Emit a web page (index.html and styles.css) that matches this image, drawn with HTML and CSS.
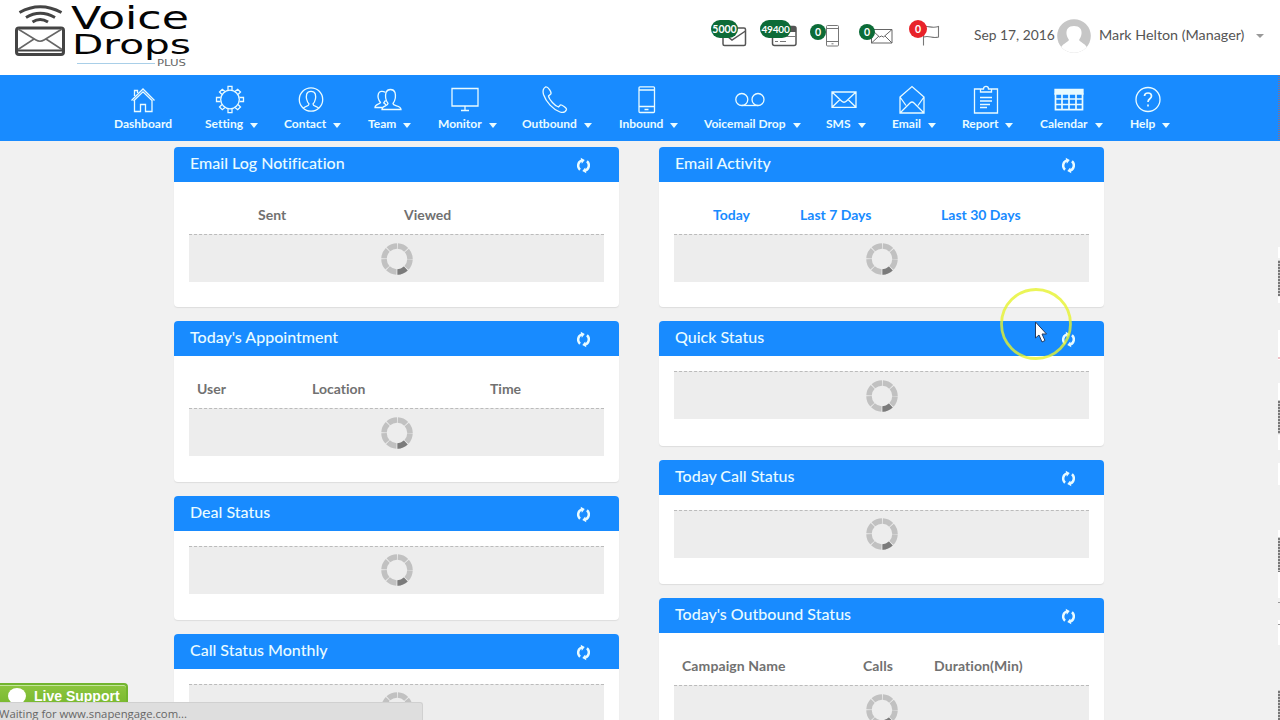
FILE: index.html
```html
<!DOCTYPE html>
<html lang="en">
<head>
<meta charset="utf-8">
<title>Voice Drops Plus</title>
<link rel="stylesheet" href="styles.css">
</head>
<body>
<svg class="defs" aria-hidden="true">
  <symbol id="refresh" viewBox="0 0 16 18">
    <path d="M6.2 3.6C1.6 5.4 1.2 10.800 4.300 13.500M9.800 14.400C14.400 12.600 14.800 7.200 11.700 4.500" fill="none" stroke="currentColor" stroke-width="2.600"/>
    <path d="M5 .8 9.300 3.200 6.200 7zM11 17.200 6.700 14.800 9.800 11z" fill="currentColor"/>
  </symbol>
  <symbol id="loader" viewBox="0 0 32 32">
    <circle cx="16" cy="16" r="13" fill="none" stroke="#c1c1c1" stroke-width="5.500" stroke-dasharray="9.400 .81" stroke-dashoffset="-.4"/>
    <path d="M16.500 26.200V31.700A15.700 15.700 0 0 0 26.700 27.400L22.900 23.500A10.300 10.300 0 0 1 16.500 26.200z" fill="#7b7b7b"/>
  </symbol>
</svg>

<header class="top">
  <svg class="logo" viewBox="0 0 200 75" width="200" height="75">
    <g fill="none" stroke="#444" stroke-width="3">
      <path d="M19.500 12.500Q40 1 61.500 12.500M26 17.500Q40 9 55 17.500M32.500 22Q40 17 48 22"/>
      <rect x="16.500" y="28" width="47" height="26.500" rx="2.500"/>
      <path d="M17 50.500H63" stroke-width="2"/>
      <path d="M18 29 36 40Q40 42.500 44 40L62 29M18 49.500 34 39M62 49.500 46 39" stroke="#666" stroke-width="1.500"/>
    </g>
    <text class="logo-text" x="71" y="28.500" font-size="32" textLength="118" lengthAdjust="spacingAndGlyphs">Voice</text>
    <text class="logo-text" x="72" y="53.500" font-size="27" textLength="119" lengthAdjust="spacingAndGlyphs">Drops</text>
    <path d="M77 63.500H155" stroke="#a9cfe8"/>
    <text class="logo-plus" x="157" y="66" textLength="29" lengthAdjust="spacingAndGlyphs">PLUS</text>
  </svg>
  <div class="statuses">
    <div class="status"><svg width="40" height="34" viewBox="0 0 40 34"><g fill="none" stroke="#555" stroke-width="1.500"><rect x="13" y="10" width="22.500" height="17.500" rx="1.500"/><path d="M13 15 22 22 35.500 13"/></g></svg><b class="badge wide">5000</b></div>
    <div class="status"><svg width="40" height="34" viewBox="0 0 40 34"><rect x="13.500" y="8.500" width="23.500" height="19" rx="2" fill="none" stroke="#555" stroke-width="1.500"/><path d="M28 9h9v5h-9z" fill="#555"/><path d="M13 18.500H37M16 23.500h3m2 0h6" stroke="#777"/></svg><b class="badge wider">49400</b></div>
    <div class="status"><svg width="40" height="34" viewBox="0 0 40 34"><g fill="none" stroke="#777"><rect x="16.500" y="7.500" width="12" height="20.500" rx="1"/><path d="M16.500 10.500h12M16.500 23.500h12M21.500 25.800h2"/></g></svg><b class="badge">0</b></div>
    <div class="status"><svg width="40" height="34" viewBox="0 0 40 34"><path d="M12.500 11.500h20.500v13.500H12.500zL20.500 19Q22.500 17 24.500 19L33 11.500M12.500 25 20 18M33 25 26 18" fill="none" stroke="#666"/></svg><b class="badge">0</b></div>
    <div class="status"><svg width="40" height="34" viewBox="0 0 40 34"><path d="M16.500 8V27.500M16.500 9C22 7 24 11 31.500 8.500V19C25 21 23 17 16.500 19" fill="none" stroke="#777" stroke-width="1.100"/></svg><b class="badge alert">0</b></div>
  </div>
  <div class="account">
    <span class="date">Sep 17, 2016</span>
    <svg class="avatar" viewBox="0 0 34 34" width="34" height="34"><defs><clipPath id="round"><circle cx="17" cy="17" r="16.800"/></clipPath></defs><g clip-path="url(#round)"><path d="M0 0H34V34H0z" fill="#c6c6c6"/><path d="M17 7C11.500 7 9 10 9.500 15 10 18 11 19 12 21 10 24 6 24 3 30V34H31V30C28 24 24 24 22 21 23 19 24 18 24.500 15 25 10 22.500 7 17 7z" fill="#fff"/></g></svg>
    <span class="name">Mark Helton (Manager)</span>
    <i class="caret gray"></i>
  </div>
</header>

<nav class="nav">
  <a class="item plain"><svg viewBox="0 0 30 30"><path d="M3.500 15.500 15 4 26.500 15.500M5.500 16 15 6.800 24.500 16M6.500 11V5.500h3V8M6.500 15.500V26.500H12.500V19.500h5V26.500H24V15.500"/></svg><span>Dashboard</span></a>
  <a class="item"><svg viewBox="0 0 30 30"><circle cx="15" cy="14.500" r="9.300"/><path d="M13 5V1.300h4V5M13 24v3.700h4V24M5.500 12.500H1.500v4H5.500M24.500 12.500h4v4H24.500M7 9.500 4.500 7 7.300 4.300 10 6.500M20 6.500 22.700 4.300 25.500 7 23 9.500M7 19.500 4.500 22 7.300 24.700 10 22.500M20 22.500 22.700 24.700 25.500 22 23 19.500"/></svg><span>Setting<i class="caret"></i></span></a>
  <a class="item"><svg viewBox="0 0 30 30"><circle cx="15" cy="14.500" r="11.700"/><path d="M7.500 23C9 21 13 21.500 13 19 10.500 16 10 12 10.700 9 12 5.500 18 5.500 19.300 9 20 12 19.500 16 17 19 17 21.500 21 21 22.500 23"/></svg><span>Contact<i class="caret"></i></span></a>
  <a class="item"><svg viewBox="0 0 30 30"><path d="M9 24.500C9 20 15 21.500 15 18.500 12.500 15 12 11 13 7.500 14.500 3.500 20.500 3.500 22 7.500 23 11 22.500 15 20 18.500 20 21.500 28 20 28 24.500zM9.500 22.500H2C2 19 7 19.500 7.500 17.500 5 14.500 4.500 11.500 5.500 8.500 6.500 6.500 9.500 5.500 12.200 7.300M12.500 15.500 10.700 17.800 13 19.700"/></svg><span>Team<i class="caret"></i></span></a>
  <a class="item"><svg viewBox="0 0 30 30"><path d="M2 3.500H28V21H2zM15 21v4M11 25.500h8"/></svg><span>Monitor<i class="caret"></i></span></a>
  <a class="item"><svg viewBox="0 0 30 30"><path d="M5.500 2C3 3.500 2.500 6 3.500 9.500 6 17 13 24.500 20 27 23 28 25.500 27 26.500 24.500 27 23 21.500 19.300 20.300 20L18.500 22C15 21 9 14.500 8.500 11L10.800 9C12 7.500 8 1.300 5.500 2z"/></svg><span>Outbound<i class="caret"></i></span></a>
  <a class="item"><svg viewBox="0 0 30 30"><rect x="7" y="1.800" width="15.500" height="25.700" rx="1"/><path d="M7 5h15.500M7 21.500h15.500M12.500 24.500h4"/></svg><span>Inbound<i class="caret"></i></span></a>
  <a class="item"><svg viewBox="0 0 30 30"><circle cx="6.800" cy="14.500" r="6"/><circle cx="23" cy="14.500" r="6"/><path d="M6.800 20.500H23"/></svg><span>Voicemail Drop<i class="caret"></i></span></a>
  <a class="item"><svg viewBox="0 0 30 30"><path d="M3 7H27V22.300H3zL12.500 16Q15 18.500 17.500 16L27 7M3 22.300 11 14.500M27 22.300 19 14.500"/></svg><span>SMS<i class="caret"></i></span></a>
  <a class="item"><svg viewBox="0 0 30 30"><path d="M3 12 15 1.500 27 12V28H3zM3 12 9 20.500M27 12 21 20.500M3 28 13 18Q15 16 17 18L27 28"/></svg><span>Email<i class="caret"></i></span></a>
  <a class="item"><svg viewBox="0 0 30 30"><path d="M9.500 4H3.500V28H26.500V4H20.500M9.500 7V4H12.500C12.500 .5 17.500 .5 17.500 4H20.500V7zM9 12.500H21M9 16H21M9 19.500H19M9 22.500H16"/></svg><span>Report<i class="caret"></i></span></a>
  <a class="item"><svg viewBox="0 0 30 30"><path d="M1 4.500H29V9H1z" fill="currentColor"/><path d="M1.500 8V24.700H28.500V8M1.500 14H28.500M1.500 19.500H28.500M8 9V24.500M15 9V24.500M22 9V24.500" stroke-width="1.700"/></svg><span>Calendar<i class="caret"></i></span></a>
  <a class="item"><svg viewBox="0 0 30 30"><circle cx="15" cy="14.500" r="12"/><path d="M11.500 11C11.500 7 18.500 7 18.500 11 18.500 14 15 13.500 15 17M15 19.500V21.500" stroke-width="1.700"/></svg><span>Help<i class="caret"></i></span></a>
</nav>

<main class="board">
  <div class="column">
    <section class="card tall">
      <h2>Email Log Notification<svg class="refresh"><use href="#refresh"/></svg></h2>
      <div class="heads sent"><span>Sent</span><span>Viewed</span></div>
      <div class="loading"><svg><use href="#loader"/></svg></div>
    </section>
    <section class="card tall">
      <h2>Today's Appointment<svg class="refresh"><use href="#refresh"/></svg></h2>
      <div class="heads appointment"><span>User</span><span>Location</span><span>Time</span></div>
      <div class="loading"><svg><use href="#loader"/></svg></div>
    </section>
    <section class="card">
      <h2>Deal Status<svg class="refresh"><use href="#refresh"/></svg></h2>
      <div class="loading"><svg><use href="#loader"/></svg></div>
    </section>
    <section class="card">
      <h2>Call Status Monthly<svg class="refresh"><use href="#refresh"/></svg></h2>
      <div class="loading"><svg><use href="#loader"/></svg></div>
    </section>
  </div>
  <div class="column">
    <section class="card tall">
      <h2>Email Activity<svg class="refresh"><use href="#refresh"/></svg></h2>
      <div class="heads activity"><span>Today</span><span>Last 7 Days</span><span>Last 30 Days</span></div>
      <div class="loading"><svg><use href="#loader"/></svg></div>
    </section>
    <section class="card">
      <h2>Quick Status<svg class="refresh"><use href="#refresh"/></svg></h2>
      <div class="loading"><svg><use href="#loader"/></svg></div>
    </section>
    <section class="card">
      <h2>Today Call Status<svg class="refresh"><use href="#refresh"/></svg></h2>
      <div class="loading"><svg><use href="#loader"/></svg></div>
    </section>
    <section class="card tall">
      <h2>Today's Outbound Status<svg class="refresh"><use href="#refresh"/></svg></h2>
      <div class="heads outbound"><span>Campaign Name</span><span>Calls</span><span>Duration(Min)</span></div>
      <div class="loading"><svg><use href="#loader"/></svg></div>
    </section>
  </div>
</main>

<svg class="edge" width="2" height="645" viewBox="0 75 2 645">
  <path d="M1 75V141" stroke="#77749c" stroke-width="2" stroke-dasharray="1 1"/>
  <path d="M1 247V258M1 280V290M1 297V303M1 330V360M1 383V400M1 435V450M1 463V485M1 530V545M1 572V598M1 620V645" stroke="#fff" stroke-width="2"/>
  <path d="M1 260V296M1 400V434M1 537V572M1 690V720" stroke="#777" stroke-width="2"/>
  <path d="M1 260V296M1 400V434M1 537V572M1 690V720" stroke="#ccc" stroke-width="2" stroke-dasharray="1 2"/>
  <path d="M0 358H2" stroke="#e0808d"/><path d="M0 602.500H2M0 624.500H2" stroke="#999"/>
</svg>
<div class="support"><i></i>Live Support</div>
<div class="statusbar">Waiting for www.snapengage.com...</div>
<svg class="pointer" width="76" height="76" viewBox="0 0 76 76">
  <circle cx="38" cy="38" r="34.500" fill="none" stroke="#e6f32e" stroke-opacity=".8" stroke-width="2.800"/>
  <path d="M37.500 36V52L41 49 44 56 47 54.500 44 48H48.500z" fill="#fff" stroke="#223b60"/>
</svg>
</body>
</html>
```
FILE: styles.css
```css
* { box-sizing: border-box; }
body {
  margin: 0;
  width: 1280px;
  height: 720px;
  overflow: hidden;
  position: relative;
  background: #f1f1f1;
  font-family: Lato, "Liberation Sans", sans-serif;
  font-variant-ligatures: none;
}
.defs { position: absolute; width: 0; height: 0; }

.top { height: 75px; background: #fff; display: flex; }
.logo { display: block; }
.logo-text { font-family: "DejaVu Sans", sans-serif; fill: #050505; }
.logo-plus { font-family: "DejaVu Sans", sans-serif; font-size: 9px; fill: #666; }
.statuses { display: grid; grid-template-columns: 49px 51px 49px 48px 49px; margin-left: 510px; padding-top: 18px; }
.status { position: relative; height: 34px; }
.badge {
  position: absolute; left: 0; top: 6px;
  width: 16px; height: 16px; border-radius: 10px;
  background: #0c6b37; color: #fff;
  font-size: 10.5px; line-height: 16px; text-align: center;
}
.wide { top: 2px; left: 1px; width: 27px; height: 18px; line-height: 18px; }
.wider { top: 2px; left: 1px; width: 31px; height: 18px; line-height: 18px; font-size: 10px; letter-spacing: -.2px; }
.alert { top: 2px; left: 2px; width: 18px; height: 18px; line-height: 18px; background: #e8232a; }
.account { display: flex; align-items: center; height: 71px; margin-left: 18px; font-size: 14.3px; color: #555; }
.date { width: 83px; padding-bottom: 2px; white-space: nowrap; font-size: 13.8px; }
.name { width: 157px; margin-left: 8px; padding-bottom: 2px; white-space: nowrap; }
.caret { display: inline-block; border: 4px solid transparent; border-top-color: currentColor; border-bottom: 0; }
.caret.gray { color: #999; }

.nav {
  height: 66px; padding: 10px 0 0 114px; background: #188bff; color: #e9fbff;
  display: grid;
  grid-template-columns: 91px 79px 84px 70px 84px 97px 85px 122px 66px 70px 78px 90px 60px;
}
.item { display: flex; flex-direction: column; align-items: center; justify-self: start; font-weight: 700; font-size: 12px; }
.item svg { width: 30px; height: 30px; margin: 0 4px 0 0; fill: none; stroke: currentColor; stroke-width: 1.3; }
.plain svg { margin-right: 0; }
.item span { display: flex; align-items: center; line-height: 18px; white-space: nowrap; }
.item .caret { margin: 3px 0 0 7px; border-top-width: 5px; }

.board { display: grid; grid-template-columns: 445px 445px; column-gap: 40px; padding: 6px 0 0 174px; height: 579px; overflow: hidden; }
.column { display: flex; flex-direction: column; gap: 14px; }
.card { height: 124.4px; background: #fff; border-radius: 4px; box-shadow: 0 1px 1px #ddd; overflow: hidden; flex: none; }
.tall { height: 160.25px; }
.card h2 {
  display: flex; justify-content: space-between; align-items: center;
  height: 35px; margin: 0; padding: 0 28px 4px 16px;
  background: #188bff; color: #e9fbff; font-size: 16px; font-weight: 500;
}
.refresh { width: 15px; height: 17px; margin-top: 6px; }
.loading {
  height: 48px; margin: 15px 15px 0; background: #ededed; border-top: 1px dashed #bbb;
  display: flex; align-items: center; justify-content: center;
}
.loading svg { width: 32px; height: 32px; }
.heads { height: 52px; margin: 0 15px; display: grid; align-items: center; padding-top: 13px; font-size: 14px; font-weight: 700; color: #717171; white-space: nowrap; }
.heads + .loading { margin-top: 0; }
.sent { grid-template-columns: 146px 1fr; padding-left: 69px; }
.appointment { grid-template-columns: 115px 178px 1fr; padding-left: 8px; }
.activity { grid-template-columns: 87px 141px 1fr; padding-left: 39px; color: #188bff; }
.outbound { grid-template-columns: 181px 71px 1fr; padding-left: 8px; letter-spacing: .1px; }

.edge { position: absolute; right: 0; top: 75px; }
.support {
  position: absolute; left: -4px; top: 683px; width: 132px; height: 28px;
  display: flex; align-items: center; gap: 8px; padding: 0 0 2px 10px;
  background: linear-gradient(#8dc63f, #74b52c); border: 2px solid #72b52f; border-radius: 4px;
  box-shadow: inset 0 1px 0 #c4e49a; color: #fff;
  font: 700 14px "Liberation Sans", sans-serif; white-space: nowrap;
}
.support i { width: 18px; height: 16px; border-radius: 50%; background: #fff; }
.statusbar {
  position: absolute; left: -1px; top: 702px; width: 424px; height: 18px;
  background: #dedede; border: 1px solid #d0d0d0; border-bottom: 0; border-radius: 0 3px 0 0; overflow: hidden;
  color: #666; font: 11.3px/22px "Open Sans", sans-serif; text-indent: -1px;
}
.pointer { position: absolute; left: 998px; top: 286px; }
```
